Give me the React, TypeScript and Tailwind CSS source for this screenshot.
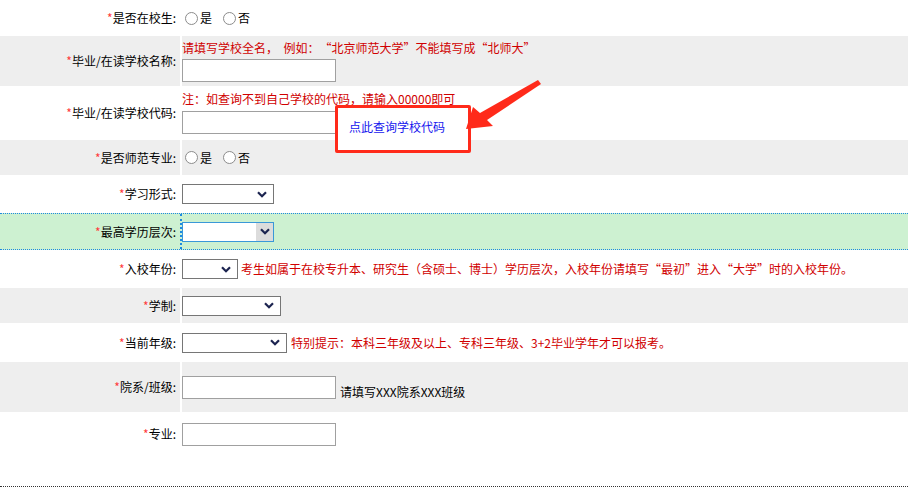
import type { ReactNode } from "react";

function Label({ text }: { text: string }) {
  return (
    <div className="flex w-[180px] shrink-0 items-center justify-end pr-[4px]">
      <span className="text-[#ff3b3b]">*</span>
      <span>{text}:</span>
    </div>
  );
}

function Row({
  label,
  gray,
  h,
  children,
  content = "items-center",
}: {
  label: string;
  gray?: boolean;
  h: string;
  children?: ReactNode;
  content?: string;
}) {
  const bg = gray ? "bg-[#eeeeee]" : "bg-white";
  return (
    <div className={`flex gap-[2px] bg-white ${h}`}>
      <div className={`flex ${bg}`}>
        <Label text={label} />
      </div>
      <div className={`flex flex-1 ${content} ${bg}`}>{children}</div>
    </div>
  );
}

// full-width quoted phrase, like the CJK quotes in the original page
function Quoted({ text }: { text: string }) {
  return (
    <>
      <span className="inline-block w-[12px] text-right">“</span>
      {text}
      <span className="inline-block w-[12px] text-left">”</span>
    </>
  );
}

function Radio({ label }: { label: string }) {
  return (
    <span className="inline-flex items-center">
      <span className="h-[13px] w-[13px] rounded-full border border-[#8c8c8c] bg-white" />
      <span className="ml-[2px]">{label}</span>
    </span>
  );
}

function Chevron() {
  return (
    <svg width="10" height="7" viewBox="0 0 10 7">
      <polyline
        points="1,1.2 5,5.2 9,1.2"
        fill="none"
        stroke="#1c2450"
        strokeWidth="2.2"
      />
    </svg>
  );
}

function Select({ w, focused }: { w: string; focused?: boolean }) {
  if (focused) {
    return (
      <div className={`relative h-[20px] border border-[#3a98d8] bg-white ${w}`}>
        <div className="absolute bottom-0 right-0 top-0 flex w-[17px] items-center justify-center bg-[#dcdcdc]">
          <Chevron />
        </div>
      </div>
    );
  }
  return (
    <div className={`relative flex h-[20px] items-center justify-end border border-[#767676] bg-white pr-[6px] ${w}`}>
      <Chevron />
    </div>
  );
}

function TextInput() {
  return <div className="h-[23px] w-[154px] border border-[#a0a0a0] bg-white" />;
}

export default function App() {
  return (
    <div className="relative h-[490px] w-[908px] overflow-hidden bg-white font-['Noto_Sans_CJK_SC',sans-serif] text-[12px] leading-[18px] text-black">
      <Row label="是否在校生" h="h-[36px]">
        <div className="flex items-center gap-[11px] pl-[3px]">
          <Radio label="是" />
          <Radio label="否" />
        </div>
      </Row>

      <Row label="毕业/在读学校名称" gray h="h-[50px]" content="flex-col justify-start pt-[3px]">
        <div className="mb-[2px] whitespace-pre text-[#d00000]">
          请填写学校全名，  例如：<Quoted text="北京师范大学" />不能填写成<Quoted text="北师大" />
        </div>
        <TextInput />
      </Row>

      <Row label="毕业/在读学校代码" h="h-[54px]" content="flex-col justify-start pt-[4px]">
        <div className="mb-[3px] text-[#d00000]">注：如查询不到自己学校的代码，请输入00000即可</div>
        <TextInput />
      </Row>

      <Row label="是否师范专业" gray h="h-[35px]">
        <div className="flex items-center gap-[11px] pl-[3px]">
          <Radio label="是" />
          <Radio label="否" />
        </div>
      </Row>

      <Row label="学习形式" h="h-[38px]">
        <Select w="w-[92px]" />
      </Row>

      <div className="flex h-[37px] border-y border-dotted border-[#1e8ae0] bg-[#cdf1d1]">
        <div className="flex">
          <Label text="最高学历层次" />
        </div>
        <div className="flex flex-1 items-center border-l-2 border-dotted border-[#1e8ae0]">
          <Select w="w-[92px]" focused />
        </div>
      </div>

      <Row label="入校年份" h="h-[38px]">
        <Select w="w-[56px]" />
        <span className="ml-[3px] text-[#d00000]">
          考生如属于在校专升本、研究生（含硕士、博士）学历层次，入校年份请填写<Quoted text="最初" />进入<Quoted text="大学" />时的入校年份。
        </span>
      </Row>

      <Row label="学制" gray h="h-[35px]">
        <Select w="w-[99px]" />
      </Row>

      <Row label="当前年级" h="h-[39px]">
        <Select w="w-[105px]" />
        <span className="ml-[4px] text-[#d00000]">特别提示：本科三年级及以上、专科三年级、3+2毕业学年才可以报考。</span>
      </Row>

      <Row label="院系/班级" gray h="h-[50px]">
        <TextInput />
        <span className="ml-[4px] mt-[10px]">请填写XXX院系XXX班级</span>
      </Row>

      <Row label="专业" h="h-[44px]">
        <TextInput />
      </Row>

      <div className="h-[30px]" />
      <div className="border-t border-dotted border-[#333333]" />

      {/* popup with link */}
      <div className="absolute left-[335px] top-[105px] flex h-[48px] w-[136px] items-center rounded-[2px] border-[3px] border-[#ff2a1a] bg-white pb-[4px] pl-[11px]">
        <a className="text-[#1515ee]">点此查询学校代码</a>
      </div>

      <svg className="absolute left-0 top-0" width="908" height="490" viewBox="0 0 908 490">
        <polygon
          points="466,129 473,107 480,113 538,80 541,84 487,120 493,126"
          fill="#ff2a1a"
        />
      </svg>
    </div>
  );
}
